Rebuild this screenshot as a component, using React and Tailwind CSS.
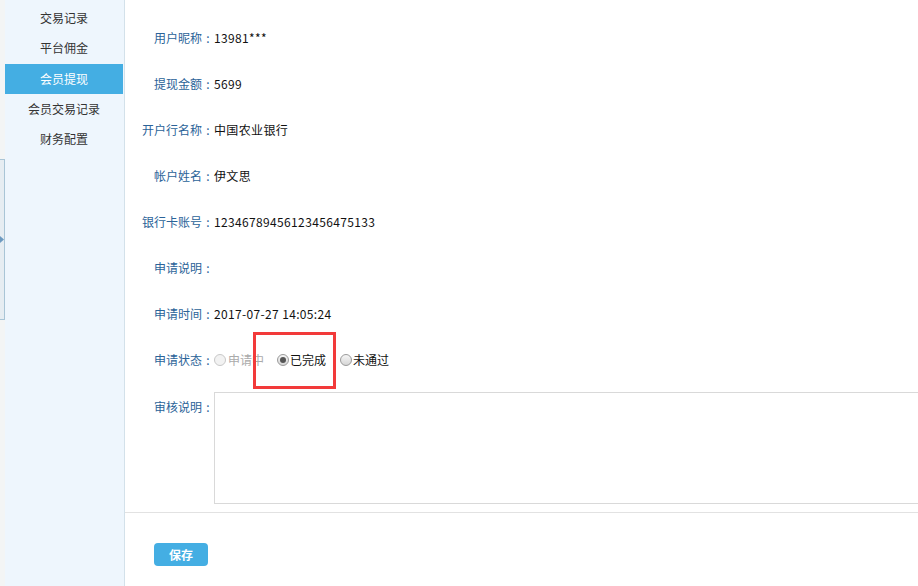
import React from "react";

const font = { fontFamily: '"Microsoft YaHei","Noto Sans CJK SC","Noto Sans",sans-serif' };

function Radio({ checked, disabled }) {
  return (
    <span
      className={`inline-flex items-center justify-center w-[12px] h-[12px] rounded-full border ${
        disabled ? "border-[#c8c8c8] bg-[#f2f2f2]" : "border-[#9a9a9a] bg-gradient-to-b from-[#f6f6f6] to-[#d6d6d6]"
      }`}
    >
      {checked && <span className="w-[6px] h-[6px] rounded-full bg-[#555]" />}
    </span>
  );
}

function Label({ text, className = "" }) {
  return (
    <div className={`w-[89px] shrink-0 flex justify-end text-[#2b6398] ${className}`}>
      <span>{text}</span>
      <span className="w-[12px] text-center">:</span>
    </div>
  );
}

function Row({ label, value }) {
  return (
    <div className="flex items-center h-[46px]">
      <Label text={label} />
      <div className="text-[#111] tracking-[0.35px]">{value}</div>
    </div>
  );
}

export default function App() {
  const menu = ["交易记录", "平台佣金", "会员提现", "会员交易记录", "财务配置"];
  return (
    <div className="flex w-[918px] h-[586px] overflow-hidden bg-white text-[12px]" style={font}>
      <div className="w-[5px] shrink-0 bg-[#f3f5f5] flex flex-col">
        <div className="h-[159px]" />
        <div className="h-[161px] bg-[#e6edf2] border border-l-0 border-[#a9c5d6] flex items-center">
          <svg width="4" height="7" viewBox="0 0 4 7">
            <path d="M0 0 L4 3.5 L0 7 Z" fill="#6d9ac0" />
          </svg>
        </div>
      </div>
      <div className="w-[120px] shrink-0 bg-[#eef6fd] border-r border-[#d3e1ea] pt-[3px]">
        {menu.map((m) => (
          <div
            key={m}
            className={`h-[30px] flex items-center justify-center mr-px ${
              m === "会员提现" ? "bg-[#44aee3] text-white mt-px" : "text-[#333]"
            }`}
          >
            {m}
          </div>
        ))}
      </div>
      <div className="flex-1 min-w-0 overflow-hidden relative flex flex-col">
        <div className="pt-[15px]">
          <Row label="用户昵称" value="13981***" />
          <Row label="提现金额" value="5699" />
          <Row label="开户行名称" value="中国农业银行" />
          <Row label="帐户姓名" value="伊文思" />
          <Row label="银行卡账号" value="12346789456123456475133" />
          <Row label="申请说明" value="" />
          <Row label="申请时间" value="2017-07-27 14:05:24" />
          <div className="flex items-center h-[46px]">
            <Label text="申请状态" />
            <div className="flex items-center">
              <Radio disabled />
              <span className="ml-[2px] text-[#aaa]">申请中</span>
              <span className="ml-[13px]" />
              <Radio checked />
              <span className="ml-[1px] text-[#111]">已完成</span>
              <span className="ml-[14px]" />
              <Radio />
              <span className="ml-[1px] text-[#111]">未通过</span>
            </div>
          </div>
          <div className="flex mt-[9px]">
            <Label text="审核说明" className="pt-[6px]" />
            <div className="w-[720px] h-[112px] border border-[#d9d9d9] shrink-0" />
          </div>
        </div>
        <div className="mt-[8px] border-t border-[#e2e2e2] pt-[30px] pl-[29px]">
          <button className="w-[54px] h-[23px] rounded-[4px] bg-[#44aee3] text-white text-[12px] font-bold">
            保存
          </button>
        </div>
        <div className="absolute left-[128px] top-[332px] w-[83px] h-[57px] border-[3px] border-[#f23a3a]" />
      </div>
    </div>
  );
}
